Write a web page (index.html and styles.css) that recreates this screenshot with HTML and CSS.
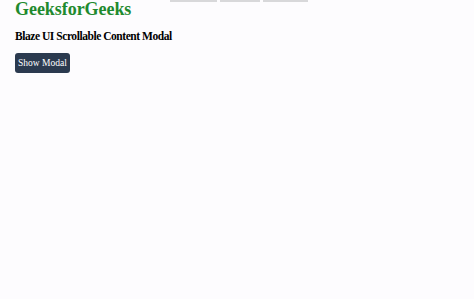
FILE: index.html
```html
<!DOCTYPE html>
<html lang="en">

<head>
    <meta charset="UTF-8">
    <meta name="viewport" content="width=device-width, initial-scale=1.0">
    <title>Blaze UI Scrollable Content Modal</title>
    <link rel="stylesheet" href="styles.css">
</head>

<body>
    <div id="traka">
        <span class="crtica" id="prva"></span>
        <span class="crtica" id="druga"></span>
        <span class="crtica" id="treca"></span>
    </div>
    <div id="sadrzaj">
        <h1 id="naslov">GeeksforGeeks</h1>
        <h3 id="podnaslov">Blaze UI Scrollable Content Modal</h3>
        <button id="dugme">Show Modal</button>
    </div>
</body>

</html>
```

FILE: styles.css
```css
body {
    margin: 0;
    background-color: #fdfcfe;
    font-family: "Liberation Serif", "Times New Roman", serif;
    height: 299px;
    overflow: hidden;
}

#traka {
    position: absolute;
    top: 0;
    left: 170px;
    display: flex;
    gap: 3px;
}

.crtica {
    display: block;
    height: 2px;
    background-color: #d8d8da;
}

#prva {
    width: 47px;
}

#druga {
    width: 40px;
}

#treca {
    width: 45px;
}

#sadrzaj {
    padding: 0 15px;
}

#naslov {
    color: #1f8a2e;
    font-size: 18px;
    letter-spacing: -0.05px;
    margin: -1px 0 0 0;
    line-height: 20px;
}

#podnaslov {
    font-size: 11.5px;
    letter-spacing: -0.45px;
    margin: 10px 0 0 0;
    line-height: 14px;
}

#dugme {
    display: block;
    margin-top: 10px;
    background-color: #2b3a4f;
    color: white;
    border: none;
    border-radius: 3px;
    font-family: "Liberation Serif", "Times New Roman", serif;
    font-size: 9.5px;
    white-space: nowrap;
    text-align: center;
    padding: 0;
    height: 20px;
    width: 55px;
}
```
